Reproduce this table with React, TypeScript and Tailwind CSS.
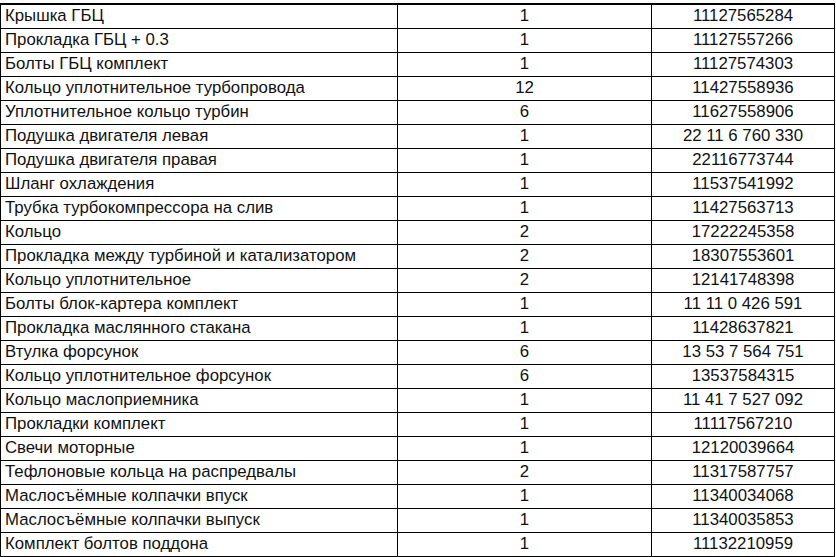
import React from 'react';

const rows: [string, string, string][] = [
  ['Крышка ГБЦ', '1', '11127565284'],
  ['Прокладка ГБЦ + 0.3', '1', '11127557266'],
  ['Болты ГБЦ комплект', '1', '11127574303'],
  ['Кольцо уплотнительное турбопровода', '12', '11427558936'],
  ['Уплотнительное кольцо турбин', '6', '11627558906'],
  ['Подушка двигателя левая', '1', '22 11 6 760 330'],
  ['Подушка двигателя правая', '1', '22116773744'],
  ['Шланг охлаждения', '1', '11537541992'],
  ['Трубка турбокомпрессора на слив', '1', '11427563713'],
  ['Кольцо', '2', '17222245358'],
  ['Прокладка между турбиной и катализатором', '2', '18307553601'],
  ['Кольцо уплотнительное', '2', '12141748398'],
  ['Болты блок-картера комплект', '1', '11 11 0 426 591'],
  ['Прокладка маслянного стакана', '1', '11428637821'],
  ['Втулка форсунок', '6', '13 53 7 564 751'],
  ['Кольцо уплотнительное форсунок', '6', '13537584315'],
  ['Кольцо маслоприемника', '1', '11 41 7 527 092'],
  ['Прокладки комплект', '1', '11117567210'],
  ['Свечи моторные', '1', '12120039664'],
  ['Тефлоновые кольца на распредвалы', '2', '11317587757'],
  ['Маслосъёмные колпачки впуск', '1', '11340034068'],
  ['Маслосъёмные колпачки выпуск', '1', '11340035853'],
  ['Комплект болтов поддона', '1', '11132210959'],
];

export default function App() {
  return (
    <div
      className="w-[836px] h-[557px] overflow-hidden bg-white text-[#111]"
      style={{ fontFamily: '"Liberation Sans", Arial, sans-serif' }}
    >
      <div className="h-[3px]" />
      <div className="w-[835px] h-[2px] bg-black" />
      <div className="w-[835px] border-l border-black">
        {rows.map(([name, qty, code]) => (
          <div key={name} className="grid grid-cols-[397px_254px_183px] h-[24px] text-[16.8px] leading-none">
            <div className="border-r border-b border-black flex items-end pl-[4px] pb-[3px] whitespace-nowrap">
              {name}
            </div>
            <div className="border-r border-b border-black flex items-end justify-center pb-[3px]">
              {qty}
            </div>
            <div className="border-r border-b border-black flex items-end justify-center pb-[3px]">
              {code}
            </div>
          </div>
        ))}
      </div>
    </div>
  );
}
